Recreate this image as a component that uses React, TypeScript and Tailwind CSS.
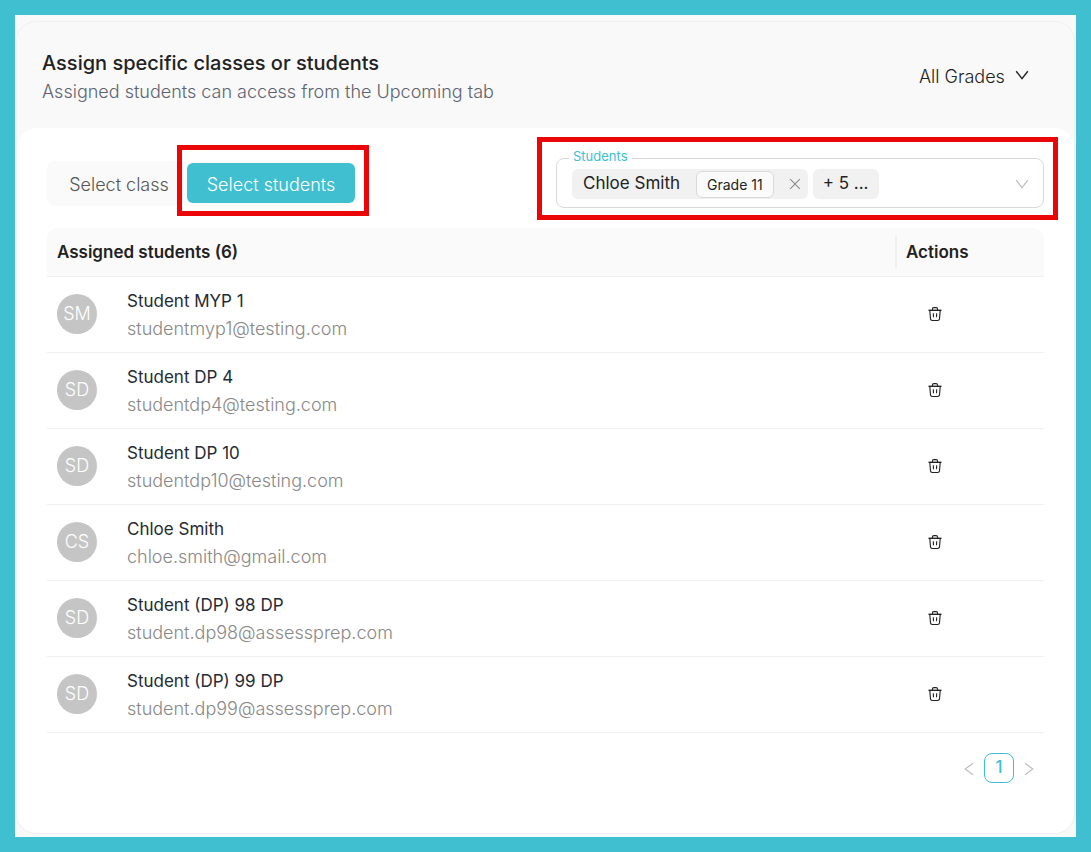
import { useState } from "react";

type Student = { initials: string; name: string; email: string };

const students: Student[] = [
  { initials: "SM", name: "Student MYP 1", email: "studentmyp1@testing.com" },
  { initials: "SD", name: "Student DP 4", email: "studentdp4@testing.com" },
  { initials: "SD", name: "Student DP 10", email: "studentdp10@testing.com" },
  { initials: "CS", name: "Chloe Smith", email: "chloe.smith@gmail.com" },
  { initials: "SD", name: "Student (DP) 98 DP", email: "student.dp98@assessprep.com" },
  { initials: "SD", name: "Student (DP) 99 DP", email: "student.dp99@assessprep.com" },
];

function Icon({ d, className, width = 1.2 }: { d: string; className: string; width?: number }) {
  return (
    <svg viewBox="0 0 14 14" fill="none" stroke="currentColor" strokeWidth={width} className={className} aria-hidden="true">
      <path d={d} />
    </svg>
  );
}

const chevronDown = "M1.2 3.2 7 10.7l5.8-7.5";

function TrashIcon() {
  return (
    <svg viewBox="0 0 16 16" fill="none" stroke="currentColor" strokeWidth="1.1" className="size-4" aria-hidden="true">
      <path d="M1.5 4.3h13" strokeWidth="1.4" />
      <path d="M5.4 4V3.3c0-1 .7-1.7 1.6-1.7h2c.9 0 1.6.7 1.6 1.7V4" />
      <path d="M2.8 4.6l.7 8.3c.1 1 .8 1.6 1.8 1.6h5.4c1 0 1.7-.6 1.8-1.6l.7-8.3" />
      <path d="M6.3 7.2l.2 4.1M9.7 7.2l-.2 4.1" />
    </svg>
  );
}

function StudentPicker() {
  return (
    <div className="relative flex h-[50px] w-[488px] items-center rounded-lg border border-[#d9d9d9] pt-0.5 pr-3.5 pl-[15px]">
      <label htmlFor="students" className="absolute -top-[11px] left-3 bg-white px-1 text-[13px] leading-4 text-[#40bfd1]">
        Students
      </label>
      <div className="flex h-[30px] items-center rounded-md bg-[#f1f1f1] pr-1.5 pl-[11px]">
        <span className="text-[17px]">Chloe Smith</span>
        <span className="ml-4 flex h-[27px] items-center rounded-md border border-[#d9d9d9] bg-[#fafafa] px-2.5 text-[14px]">
          Grade 11
        </span>
        <button type="button" aria-label="Remove Chloe Smith" className="ml-3.5 text-[#8c8c8c]">
          <Icon d="M2.2 2.2l9.6 9.6M11.8 2.2l-9.6 9.6" className="size-3.5" />
        </button>
      </div>
      <span className="ml-[5px] flex h-[30px] items-center rounded-md bg-[#f1f1f1] px-2.5 text-[17px]">+ 5 ...</span>
      <input id="students" type="text" className="h-8 min-w-0 flex-1 bg-transparent px-2 outline-none" />
      <button type="button" aria-label="Show students" className="text-[#bfbfbf]">
        <Icon d={chevronDown} className="size-3.5" />
      </button>
      <div className="pointer-events-none absolute -top-[22px] -right-[15px] -bottom-[13px] -left-5 border-5 border-[#ea0606]" />
    </div>
  );
}

export default function App() {
  const [mode, setMode] = useState("students");
  return (
    <main className="flex min-h-screen flex-col border-[15px] border-[#40bfd1] bg-[#f9f9f9] px-px pt-1.5 pb-[3px] font-['Inter',sans-serif] text-[#222]">
      <section className="flex flex-1 flex-col rounded-[20px] border border-[#f0f0f0]">
        <header className="flex h-[106px] items-center justify-between pt-1 pr-[45px] pl-[25px]">
          <div>
            <h1 className="pt-0.5 text-[20px] leading-7 font-medium">Assign specific classes or students</h1>
            <p className="text-[18px] leading-[30px] font-light text-[#5d6370]">Assigned students can access from the Upcoming tab</p>
          </div>
          <div className="relative flex items-center pb-1">
            <select aria-label="Grade" className="appearance-none bg-transparent pt-0.5 pr-6 text-[18px] font-light outline-none">
              <option>All Grades</option>
            </select>
            <Icon d={chevronDown} width={1.4} className="pointer-events-none absolute right-0 size-3.5" />
          </div>
        </header>

        <div className="flex-1 rounded-[20px] bg-white px-[30px] pt-[30px] pb-12">
          <div className="flex items-start justify-between">
            <div className="mt-[3px] flex h-[45px] items-start rounded-lg bg-[#fafafa] pt-0.5 pr-[3px] text-[18px] font-light">
              <button type="button" onClick={() => setMode("class")} aria-pressed={mode === "class"} className="h-10 w-[140px] pt-0.5 pl-1 text-[#555]">
                Select class
              </button>
              <button
                type="button"
                onClick={() => setMode("students")}
                aria-pressed={mode === "students"}
                className="relative h-10 w-[168px] rounded-md bg-[#40bfd1] pt-0.5 text-white"
              >
                Select students
                <span className="pointer-events-none absolute -top-[18px] -right-3.5 -bottom-[13px] -left-2.5 border-5 border-[#ea0606]" />
              </button>
            </div>
            <StudentPicker />
          </div>

          <table className="mt-5 w-full table-fixed border-separate border-spacing-0 text-left">
            <thead>
              <tr className="h-[49px] text-[17px]">
                <th className="rounded-tl-[10px] border-b border-[#f0f0f0] bg-[#fafafa] px-2.5 pt-0.5 font-semibold">Assigned students (6)</th>
                <th className="w-[149px] rounded-tr-[10px] border-b border-[#f0f0f0] bg-[#fafafa] font-semibold">
                  <div className="flex h-8 items-center border-l-2 border-[#f0f0f0] pt-0.5 pl-[9px]">Actions</div>
                </th>
              </tr>
            </thead>
            <tbody>
              {students.map((s) => (
                <tr key={s.email} className="h-[76px]">
                  <td className="border-b border-[#f0f0f0] px-2.5">
                    <div className="flex items-start gap-[30px]">
                      <span className="mt-1.5 flex size-10 items-center justify-center rounded-full bg-[#c5c5c5] text-[18px] font-light text-white">{s.initials}</span>
                      <div className="leading-[27px]">
                        <div className="text-[17px] text-[#262a33]">{s.name}</div>
                        <div className="text-[18px] font-light text-[#888]">{s.email}</div>
                      </div>
                    </div>
                  </td>
                  <td className="border-b border-[#f0f0f0] pb-0.5 pl-8">
                    <button type="button" aria-label={`Remove ${s.name}`} className="flex">
                      <TrashIcon />
                    </button>
                  </td>
                </tr>
              ))}
            </tbody>
          </table>

          <nav aria-label="Pagination" className="mt-5 flex items-center justify-end gap-2 pr-2">
            <button type="button" disabled aria-label="Previous page" className="pt-0.5 text-[#bfbfbf]">
              <Icon d="M11 1.2 3.2 7 11 12.8" className="size-3.5" />
            </button>
            <button type="button" aria-current="page" className="size-[30px] rounded-lg border border-[#40bfd1] text-[17px] font-medium text-[#40bfd1]">
              1
            </button>
            <button type="button" disabled aria-label="Next page" className="pt-0.5 text-[#bfbfbf]">
              <Icon d="M3 1.2 10.8 7 3 12.8" className="size-3.5" />
            </button>
          </nav>
        </div>
      </section>
    </main>
  );
}
